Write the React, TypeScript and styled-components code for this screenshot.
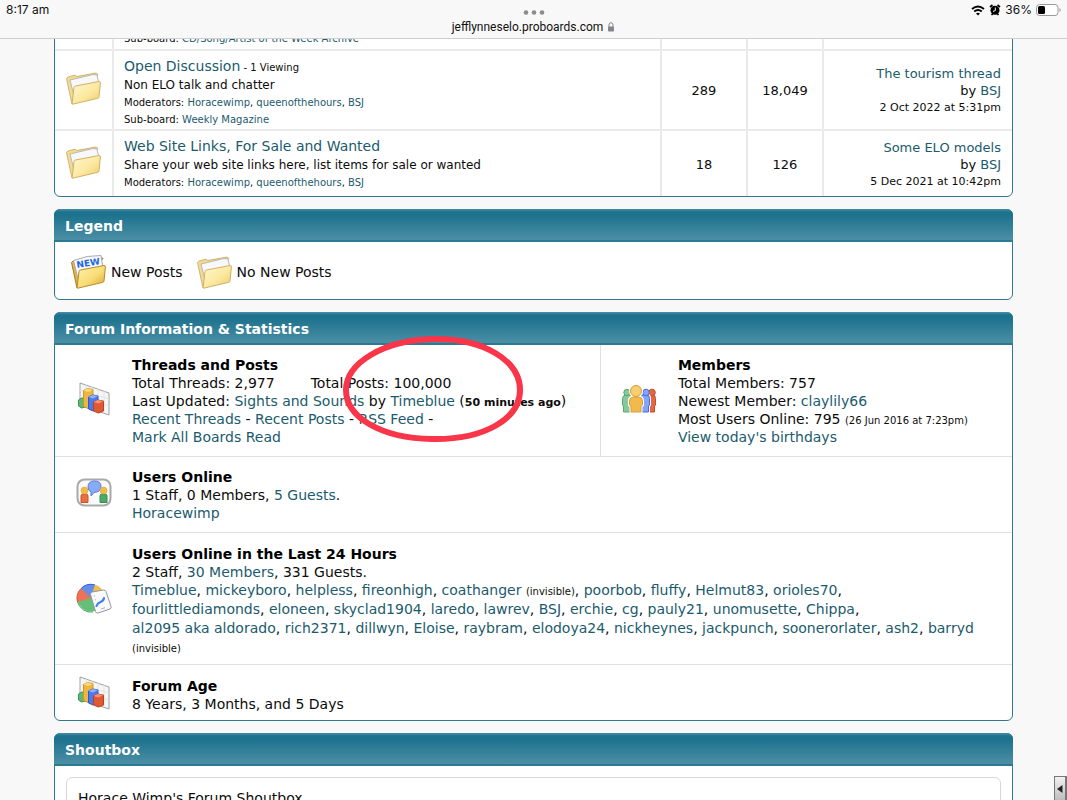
import React from "react";
import styled, { createGlobalStyle, css } from "styled-components";

const teal = "#2f7890";
const rule = "#e0e0e0";
const forumFont = `Verdana, "DejaVu Sans", sans-serif`;
const systemFont = `Inter, "Liberation Sans", sans-serif`;

const GlobalStyle = createGlobalStyle`
  * { box-sizing: border-box; }
  body { margin: 0; background: #f8f8f8; }
`;

const Screen = styled.div`
  position: relative;
  display: flex;
  flex-direction: column;
  height: 100vh;
  overflow: hidden;
  background: #f8f8f8;
  color: #0c0c0c;
  font: 14px/18px ${forumFont};
`;

const BrowserBar = styled.header`
  display: grid;
  grid-template-columns: 1fr auto 1fr;
  flex: none;
  height: 39px;
  padding: 0 6px;
  border-bottom: 1px solid #cfcfcf;
  background: #f8f8f8;
  font: 12px/20px ${systemFont};
  color: #111;
`;

const Address = styled.div`
  display: flex;
  flex-direction: column;
  align-items: center;
  gap: 4px;
  padding-top: 10px;
  font: 12px/16px Roboto, sans-serif;
`;

const AddressText = styled.div`
  display: flex;
  align-items: center;
  gap: 4px;
`;

const Status = styled.div`
  display: flex;
  justify-content: flex-end;
  align-items: center;
  align-self: start;
  gap: 4px;
  height: 20px;
`;

const Page = styled.main`
  flex: 1;
  min-height: 0;
  overflow: hidden;
  padding: 0 54px;
`;

const Stack = styled.div`
  display: flex;
  flex-direction: column;
  gap: 12px;
  margin-top: -10px;
`;

const Link = styled.a`
  color: #1b5b6d;
  text-decoration: none;
`;

const Panel = styled.section`
  border: 1px solid ${teal};
  border-radius: 6px;
  background: #fff;
`;

const PanelTitle = styled.h2`
  margin: -1px -1px 0;
  padding: 8px 11px 5px;
  border-bottom: 2px solid #2b7a93;
  border-radius: 6px 6px 0 0;
  background: linear-gradient(#4a8fa5 0, #1d728d 3px, #1d728d 6px, #4b8fa5 100%);
  color: #fff;
  font-size: 14px;
  line-height: 18px;
`;

const Boards = styled.table`
  width: 100%;
  table-layout: fixed;
  border-collapse: separate;
  border-spacing: 0;
`;

const Column = styled.col<{ $width?: number }>`
  width: ${(p) => (p.$width ? `${p.$width}px` : "auto")};
`;

const BoardRow = styled.tr<{ $height: number }>`
  height: ${(p) => p.$height}px;
`;

const Cell = styled.td`
  padding: 6px 10px 0;
  border-bottom: 2px solid #eaeaea;
  border-left: 2px solid #eaeaea;
  vertical-align: top;
  &:first-child { border-left: 0; }
  tr:last-child & { border-bottom: 0; }
  tr:first-child & { padding-top: 0; }
`;

const IconCell = styled(Cell)`
  padding: 0 0 4px;
  text-align: center;
  vertical-align: middle;
  svg { display: block; margin: 0 auto; }
`;

const CountCell = styled(Cell)`
  padding: 2px 0 0;
  font-size: 13px;
  text-align: center;
  vertical-align: middle;
`;

const LatestCell = styled(Cell)`
  padding: 2px 11px 0 0;
  font-size: 13px;
  line-height: 17px;
  text-align: right;
  vertical-align: middle;
  white-space: nowrap;
`;

const LatestDate = styled.div`
  font-size: 11px;
  line-height: 18px;
`;

const BoardName = styled.div`
  font-size: 10px;
  line-height: 18px;
  ${Link} { font-size: 14px; }
`;

const BoardText = styled.div`
  font-size: 12px;
  line-height: 17px;
`;

const BoardNote = styled.div`
  font-size: 10px;
  line-height: 17px;
`;

const LegendBody = styled.div`
  display: flex;
  align-items: center;
  gap: 13px;
  height: 57px;
  padding: 2px 15px 0;
`;

const LegendItem = styled.div`
  display: flex;
  align-items: center;
  gap: 4px;
`;

const StatsRow = styled.div<{ $compact?: boolean }>`
  display: flex;
  border-bottom: 1px solid ${rule};
  &:last-child { border-bottom: 0; }
  > * { padding: ${(p) => (p.$compact ? "12px 0 7px" : "11px 0 10px")}; }
`;

const Stat = styled.div<{ $share?: number; $divided?: boolean }>`
  position: relative;
  display: grid;
  grid-template-columns: 77px minmax(0, 1fr);
  align-items: center;
  flex: ${(p) => p.$share ?? 1} 1 0;
  white-space: nowrap;
  ${(p) => p.$divided && css`border-left: 1px solid ${rule};`}
  > svg:first-child { justify-self: center; margin: -4px 0 0; }
`;

const StatTitle = styled.h3`
  margin: 0;
  font-size: 14px;
  line-height: 18px;
  color: #000;
`;

const StatLine = styled.div`
  display: flex;
  gap: 36px;
`;

const Small = styled.small`
  font-size: 10px;
  line-height: 10px;
`;

const Ago = styled.b`
  font-size: 11px;
  line-height: 11px;
`;

const Names = styled.div`
  line-height: 19px;
`;

const Marker = styled.svg`
  position: absolute;
  left: 286px;
  top: -11px;
`;

const ShoutBody = styled.div`
  padding: 11px;
`;

const ShoutBox = styled.div`
  min-height: 200px;
  padding: 11px;
  border: 1px solid #d8d8d8;
  border-radius: 6px;
`;

const SideTab = styled.button`
  position: absolute;
  right: 0;
  bottom: 0;
  display: grid;
  place-items: center;
  width: 13px;
  height: 24px;
  padding: 0;
  border: 1px solid #777;
  border-right-width: 2px;
  border-bottom: 0;
  background: linear-gradient(#f2f2f2, #bdbdbd);
`;

function Folder({ fresh }: { fresh?: boolean }) {
  const id = fresh ? "folder-new" : "folder-old";
  return (
    <svg width="37" height="36" viewBox="0 0 37 36" aria-hidden="true">
      <defs>
        <linearGradient id={id} x1="0" y1="0" x2="1" y2="1">
          <stop offset="0" stopColor={fresh ? "#fff3a8" : "#fff7d0"} />
          <stop offset=".55" stopColor={fresh ? "#f8dc78" : "#fbe9a0"} />
          <stop offset="1" stopColor={fresh ? "#dca72c" : "#eccb6c"} />
        </linearGradient>
      </defs>
      <path d="M1.5 8.5 3 7l7-1.8 1.8 1.3L31 3l2 1.5L9 33.5l-2 .5z" fill={fresh ? "#e5b53c" : "#f3dc8e"} stroke={fresh ? "#a57a25" : "#cfb474"} strokeLinejoin="round" />
      {fresh ? (
        <>
          <path d="M3.5 6.5Q17 1 31 1.5L33.5 17 8 25z" fill="#f7f9ff" stroke="#a9abb2" />
          <text x="7" y="14" transform="rotate(-9 7 14)" fontFamily="DejaVu Sans, sans-serif" fontWeight="700" fontSize="9" fill="#2266dc">NEW</text>
        </>
      ) : (
        <path d="M5 10 28 4.5l4 .5 1.5 7L9 26z" fill="#f8f8f8" stroke="#b9b9b4" />
      )}
      <path d="M10.5 16 34 11.5q1.5 0 1.4 1.5L34 27q0 1-1.2 1.3L8.5 34q-1.5.3-1.3-1.2L9 17.5q.2-1.3 1.5-1.5z" fill={`url(#${id})`} stroke={fresh ? "#b98b25" : "#d3b066"} />
    </svg>
  );
}

function ChartIcon() {
  return (
    <svg width="34" height="36" viewBox="0 0 34 36" aria-hidden="true">
      <path d="M3 2 32 12v22L3 24z" fill="#f6f6f6" stroke="#a0a0a0" />
      <path d="M9 4v20M15 6v20M21 8v22M27 10v21M3 9l29 9M3 16l29 9" fill="none" stroke="#e4e4e8" />
      <path d="M1.500 19l3-2 4 1v8l-4 1-3-2z" fill="#5cba72" stroke="#3b944f" />
      <path d="M6.500 9.500l4-2 5.500 1v18l-5 1-4.500-2z" fill="#efb63f" stroke="#cf942c" />
      <path d="M6.500 9.500l4.500 1.500 5-2-5.500-1.500z" fill="#ffdb78" />
      <path d="M11.500 16l4-2 5.500 1v13l-5 2-4.500-2z" fill="#4b79ee" stroke="#3259cb" />
      <path d="M11.500 16l4.500 1.500 5-2.500-5.500-1z" fill="#92b2ff" />
      <path d="M16.500 21l4-2 6 1v10l-5 2-5-2z" fill="#df5a32" stroke="#b94023" />
      <path d="M16.500 21l5 1.500 5-2.500-6-1z" fill="#f59575" />
    </svg>
  );
}

function MembersIcon() {
  return (
    <svg width="36" height="30" viewBox="0 0 36 30" aria-hidden="true">
      <g fill="#86c99b" stroke="#58a872">
        <path d="M2.500 28V22L1.500 21V15q0-3.500 3-4h4q3 0 3 4v13z" />
        <circle cx="6" cy="8.500" r="3.200" />
      </g>
      <g fill="#e4693f" stroke="#c64d2b">
        <path d="M24.500 28V14q0-3.500 3-3.500h4q3 .5 3 4V21l-1 1v6z" />
        <circle cx="31" cy="8.500" r="3.300" />
      </g>
      <g fill="#84a3fa" stroke="#fff" strokeWidth="3">
        <path d="M19.500 28V14q0-3.500 3-3.500h3q3 .5 3 4V21l-1 1v6z" />
      </g>
      <g fill="#84a3fa" stroke="#486bdd">
        <path d="M19.500 28V14q0-3.500 3-3.500h3q3 .5 3 4V21l-1 1v6z" />
        <circle cx="25" cy="8.500" r="3.300" />
      </g>
      <g fill="#fff" stroke="#fff" strokeWidth="3">
        <path d="M10 28v-6l-1.500-1v-4q0-4 4-4h5q4 0 4 4v4l-1.500 1v6z" />
        <circle cx="15" cy="7" r="5.500" />
      </g>
      <g fill="#f0bb4c" stroke="#d89e35">
        <path d="M10 28v-6l-1.500-1v-4q0-4 4-4h5q4 0 4 4v4l-1.500 1v6z" />
        <circle cx="15" cy="7" r="5.500" fill="#f8ce70" />
      </g>
    </svg>
  );
}

function ChatIcon() {
  return (
    <svg width="36" height="30" viewBox="0 0 36 30" aria-hidden="true">
      <rect x="1.5" y="1.5" width="33" height="26" rx="7" fill="#fafafa" stroke="#a9a9a9" strokeWidth="2" />
      <path d="M12 9q0-6 6.500-6T25 8.500 18 14.500l-3 3.500v-4q-3-1.500-3-5z" fill="#86acf8" stroke="#5b7ae4" />
      <path d="M5 24.500V18q0-2 2-2h3q2 0 2 2v6.500z" fill="#e8703e" stroke="#ca5329" />
      <path d="M24 24.500V18q0-2 2-2h3q2 0 2 2v6.500z" fill="#4baa65" stroke="#358e4f" />
      <circle cx="8.500" cy="12.500" r="3.500" fill="#f4bb42" stroke="#dda336" strokeWidth=".6" />
      <circle cx="27.500" cy="12.500" r="3.500" fill="#f4bb42" stroke="#dda336" strokeWidth=".6" />
    </svg>
  );
}

function PieIcon() {
  return (
    <svg width="36" height="32" viewBox="0 0 36 32" aria-hidden="true">
      <circle cx="15" cy="15" r="13.500" fill="#65bf78" />
      <path d="M15 15 5 5.500A14 14 0 0 1 19 1.500z" fill="#658ee8" />
      <path d="M15 15 19 1.500A14 14 0 0 1 28 12z" fill="#f2bd4d" />
      <path d="M15 15 1.500 19A14 14 0 0 1 5 5.500z" fill="#ee7158" />
      <path d="M18.500 1.800A14 14 0 0 0 5 5.500" fill="none" stroke="#3460dc" />
      <path d="M5 5.500A14 14 0 0 0 1.500 19" fill="none" stroke="#d85444" />
      <path d="M1.500 19A14 14 0 0 0 17 29" fill="none" stroke="#44a65b" />
      <path d="m16 9 11.500-2q2 0 2.500 1.500l5 15q.5 2-1 2.500l-12 4q-2 .5-2.500-1.500l-5-17Q14 9.500 16 9z" fill="#fafafa" stroke="#969696" />
      <path d="M20.500 23q1-3 4-4 3-1 3.500-4" fill="none" stroke="#3f7ff2" strokeWidth="2.200" strokeLinecap="round" />
      <path d="M18 13l1-.4M19 17l1-.4M25 26l4-1.300" stroke="#9eb2d8" />
    </svg>
  );
}

type LatestPost = { thread: string; date: string };

function BoardStats({ threads, posts, latest }: { threads: string; posts: string; latest: LatestPost }) {
  return (
    <>
      <CountCell>{threads}</CountCell>
      <CountCell>{posts}</CountCell>
      <LatestCell>
        <Link href="#thread">{latest.thread}</Link><br />by <Link href="#bsj">BSJ</Link>
        <LatestDate>{latest.date}</LatestDate>
      </LatestCell>
    </>
  );
}

function NameList({ names }: { names: string[] }) {
  return (
    <>
      {names.map((name, i) => (
        <React.Fragment key={name}>
          {i > 0 && ", "}
          <Link href={`#${name}`}>{name}</Link>
        </React.Fragment>
      ))}
    </>
  );
}

const moderators = ["Horacewimp", "queenofthehours", "BSJ"];

export default function App() {
  return (
    <Screen>
      <GlobalStyle />
      <BrowserBar>
        <span>8:17 am</span>
        <Address>
          <svg width="22" height="5" viewBox="0 0 22 5" fill="#8b8b8b" aria-hidden="true">
            <circle cx="3" cy="2.5" r="2.3" /><circle cx="11" cy="2.5" r="2.3" /><circle cx="19" cy="2.5" r="2.3" />
          </svg>
          <AddressText>
            jefflynneselo.proboards.com
            <svg width="8" height="10" viewBox="0 0 8 10" aria-hidden="true">
              <path d="M2 5V3q0-2.300 2-2.300T6 3v2" fill="none" stroke="#85858a" />
              <rect x="1" y="4.5" width="6" height="5" rx="1" fill="#85858a" />
            </svg>
          </AddressText>
        </Address>
        <Status>
          <svg width="14" height="11" viewBox="0 0 14 11" fill="none" stroke="#000" strokeWidth="1.9" aria-hidden="true">
            <path d="M1 4q6-5 12 0M3.200 6.500q3.800-3 7.600 0" /><path d="M7 10.500 5 8.500q2-1.600 4 0z" fill="#000" stroke="none" />
          </svg>
          <svg width="12" height="12" viewBox="0 0 12 12" aria-hidden="true">
            <circle cx="6" cy="6.3" r="4.5" /><path d="M1 3 3.500 1M11 3 8.500 1M2.500 11 4 9.500M9.500 11 8 9.500" stroke="#000" strokeWidth="1.7" />
            <path d="M6.300 3.500v3L4 7.500" fill="none" stroke="#fff" />
          </svg>
          36%
          <svg width="25" height="12" viewBox="0 0 25 12" aria-hidden="true">
            <rect x=".5" y=".5" width="21.5" height="11" rx="3" fill="#fff" stroke="#999" />
            <rect x="2" y="2" width="7" height="8" rx="1.5" /><path d="M23.500 4v4q1.200-.5 1.200-2t-1.200-2z" fill="#999" />
          </svg>
        </Status>
      </BrowserBar>

      <Page>
        <Stack>
          <Panel>
            <Boards>
              <colgroup>
                <Column $width={57} /><Column /><Column $width={86} /><Column $width={76} /><Column $width={190} />
              </colgroup>
              <tbody>
                <BoardRow $height={21}>
                  <Cell />
                  <Cell>
                    <BoardNote>Sub-board: <Link href="#archive">CD/Song/Artist of the Week Archive</Link></BoardNote>
                  </Cell>
                  <Cell /><Cell /><Cell />
                </BoardRow>
                <BoardRow $height={80}>
                  <IconCell><Folder /></IconCell>
                  <Cell>
                    <BoardName><Link href="#open">Open Discussion</Link> - 1 Viewing</BoardName>
                    <BoardText>Non ELO talk and chatter</BoardText>
                    <BoardNote>Moderators: <NameList names={moderators} /></BoardNote>
                    <BoardNote>Sub-board: <Link href="#weekly">Weekly Magazine</Link></BoardNote>
                  </Cell>
                  <BoardStats threads="289" posts="18,049" latest={{ thread: "The tourism thread", date: "2 Oct 2022 at 5:31pm" }} />
                </BoardRow>
                <BoardRow $height={65}>
                  <IconCell><Folder /></IconCell>
                  <Cell>
                    <BoardName><Link href="#web">Web Site Links, For Sale and Wanted</Link></BoardName>
                    <BoardText>Share your web site links here, list items for sale or wanted</BoardText>
                    <BoardNote>Moderators: <NameList names={moderators} /></BoardNote>
                  </Cell>
                  <BoardStats threads="18" posts="126" latest={{ thread: "Some ELO models", date: "5 Dec 2021 at 10:42pm" }} />
                </BoardRow>
              </tbody>
            </Boards>
          </Panel>

          <Panel>
            <PanelTitle>Legend</PanelTitle>
            <LegendBody>
              <LegendItem><Folder fresh />New Posts</LegendItem>
              <LegendItem><Folder />No New Posts</LegendItem>
            </LegendBody>
          </Panel>

          <Panel>
            <PanelTitle>Forum Information &amp; Statistics</PanelTitle>
            <StatsRow>
              <Stat $share={57}>
                <ChartIcon />
                <div>
                  <StatTitle>Threads and Posts</StatTitle>
                  <StatLine><span>Total Threads: 2,977</span><span>Total Posts: 100,000</span></StatLine>
                  <div>Last Updated: <Link href="#sights">Sights and Sounds</Link> by <Link href="#timeblue">Timeblue</Link> (<Ago>50 minutes ago</Ago>)</div>
                  <div><Link href="#recent">Recent Threads</Link> - <Link href="#posts">Recent Posts</Link> - <Link href="#rss">RSS Feed</Link> -</div>
                  <div><Link href="#mark">Mark All Boards Read</Link></div>
                </div>
                <Marker width="184" height="112" viewBox="0 0 184 112" aria-hidden="true">
                  <path d="M92 5C143 4 179 27 179 56S143 106 91 105 5 83 5 56 43 6 92 5z" fill="none" stroke="#f93549" strokeWidth="6" />
                </Marker>
              </Stat>
              <Stat $share={43} $divided>
                <MembersIcon />
                <div>
                  <StatTitle>Members</StatTitle>
                  <div>Total Members: 757</div>
                  <div>Newest Member: <Link href="#claylily66">claylily66</Link></div>
                  <div>Most Users Online: 795 <Small>(26 Jun 2016 at 7:23pm)</Small></div>
                  <div><Link href="#birthdays">View today's birthdays</Link></div>
                </div>
              </Stat>
            </StatsRow>
            <StatsRow>
              <Stat>
                <ChatIcon />
                <div>
                  <StatTitle>Users Online</StatTitle>
                  <div>1 Staff, 0 Members, <Link href="#guests">5 Guests</Link>.</div>
                  <div><Link href="#horacewimp">Horacewimp</Link></div>
                </div>
              </Stat>
            </StatsRow>
            <StatsRow $compact>
              <Stat>
                <PieIcon />
                <div>
                  <StatTitle>Users Online in the Last 24 Hours</StatTitle>
                  <div>2 Staff, <Link href="#members">30 Members</Link>, 331 Guests.</div>
                  <Names>
                    <NameList names={["Timeblue", "mickeyboro", "helpless", "fireonhigh", "coathanger"]} /> <Small>(invisible)</Small>, <NameList names={["poorbob", "fluffy", "Helmut83", "orioles70"]} />,<br />
                    <NameList names={["fourlittlediamonds", "eloneen", "skyclad1904", "laredo", "lawrev", "BSJ", "erchie", "cg", "pauly21", "unomusette", "Chippa"]} />,<br />
                    <NameList names={["al2095 aka aldorado", "rich2371", "dillwyn", "Eloise", "raybram", "elodoya24", "nickheynes", "jackpunch", "soonerorlater", "ash2", "barryd"]} /><br />
                    <Small>(invisible)</Small>
                  </Names>
                </div>
              </Stat>
            </StatsRow>
            <StatsRow $compact>
              <Stat>
                <ChartIcon />
                <div>
                  <StatTitle>Forum Age</StatTitle>
                  <div>8 Years, 3 Months, and 5 Days</div>
                </div>
              </Stat>
            </StatsRow>
          </Panel>

          <Panel>
            <PanelTitle>Shoutbox</PanelTitle>
            <ShoutBody><ShoutBox>Horace Wimp's Forum Shoutbox</ShoutBox></ShoutBody>
          </Panel>
        </Stack>
      </Page>

      <SideTab aria-label="Open side panel">
        <svg width="6" height="8" viewBox="0 0 6 8" aria-hidden="true"><path d="M5.500 0v8L0 4z" fill="#222" /></svg>
      </SideTab>
    </Screen>
  );
}
